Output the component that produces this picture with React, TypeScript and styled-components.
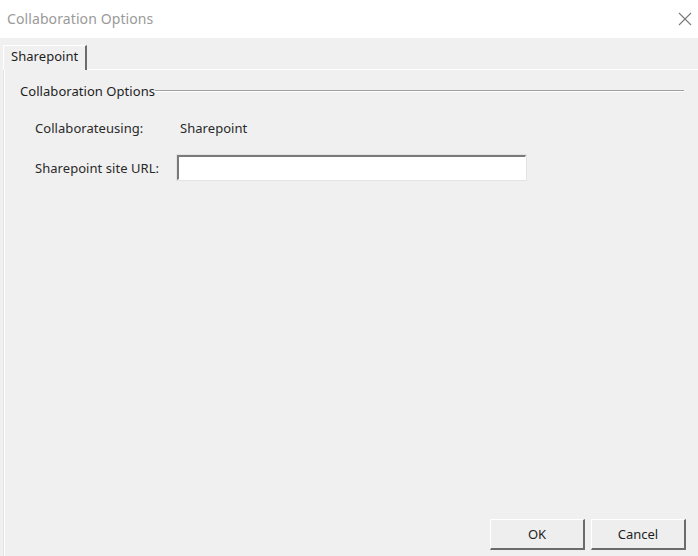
import styled, { createGlobalStyle } from 'styled-components';

const GlobalStyle = createGlobalStyle`
    html, body {
        margin: 0;
        padding: 0;
        background: #f0f0f0;
    }
    body {
        font-family: "Noto Sans", "Open Sans", "Liberation Sans", sans-serif;
        font-size: 13px;
        letter-spacing: 0.05px;
        color: #1e1e1e;
    }
`;

const Window = styled.div`
    width: 698px;
    height: 556px;
    display: flex;
    flex-direction: column;
    background: #f0f0f0;
    overflow: hidden;
`;

const TitleBar = styled.div`
    height: 38px;
    flex-shrink: 0;
    background: #ffffff;
    display: flex;
    align-items: center;
    justify-content: space-between;
    padding: 0 3px 0 7px;
`;

const Title = styled.span`
    font-size: 14px;
    letter-spacing: 0.1px;
    color: #9a9a9a;
    margin-top: -2px;
`;

const CloseButton = styled.button`
    width: 20px;
    height: 20px;
    padding: 0;
    border: none;
    background: transparent;
    display: flex;
    align-items: center;
    justify-content: center;
    margin-top: -1px;
`;

const TabStrip = styled.div`
    height: 31px;
    flex-shrink: 0;
    display: flex;
    align-items: flex-end;
    padding-left: 3px;
`;

const Tab = styled.div`
    height: 25px;
    padding: 0 7px 5px 7px;
    display: flex;
    align-items: center;
    border-top: 1px solid #ffffff;
    border-left: 1px solid #ffffff;
    border-right: 2px solid #6b6b6b;
    box-sizing: border-box;
    margin-bottom: -1px;
    position: relative;
    z-index: 1;
    background: #f0f0f0;
`;

const Panel = styled.div`
    flex: 1;
    display: flex;
    flex-direction: column;
    margin-left: 3px;
    border-top: 1px solid #ffffff;
    border-left: 1px solid #e3e3e3;
    box-shadow: inset 1px 0 0 #ffffff;
`;

const GroupHeader = styled.div`
    display: flex;
    align-items: center;
    margin: 12px 14px 0 16px;
    height: 18px;
`;

const GroupLabel = styled.span`
    color: #1e1e1e;
`;

const GroupLine = styled.div`
    flex: 1;
    height: 1px;
    background: #a0a0a0;
    border-bottom: 1px solid #ffffff;
`;

const Row = styled.div<{ $top: number }>`
    display: flex;
    align-items: center;
    margin-top: ${props => props.$top}px;
    padding-left: 31px;
    height: 25px;
`;

const Label = styled.span`
    width: 145px;
    flex-shrink: 0;
    color: #2a2a2a;
`;

const Value = styled.span`
    color: #2a2a2a;
`;

const UrlInput = styled.input`
    width: 349px;
    height: 25px;
    box-sizing: border-box;
    margin: 0 0 0 -3px;
    padding: 0 4px;
    background: #ffffff;
    border: 1px solid #ffffff;
    border-top: 2px solid #7a7a7a;
    border-left: 2px solid #7a7a7a;
    box-shadow: 0 0 0 1px #e3e3e3;
    font: inherit;
    outline: none;
`;

const Footer = styled.div`
    margin-top: auto;
    display: flex;
    justify-content: flex-end;
    gap: 6px;
    padding: 0 12px 6px 0;
`;

const Button = styled.button`
    width: 95px;
    height: 31px;
    box-sizing: border-box;
    background: #eeeeee;
    border: 1px solid #ffffff;
    border-right: 2px solid #6b6b6b;
    border-bottom: 2px solid #6b6b6b;
    font: inherit;
    color: #1e1e1e;
    padding: 0;
`;

export default function App() {
    return (
        <>
            <GlobalStyle />
            <Window>
                <TitleBar>
                    <Title>Collaboration Options</Title>
                    <CloseButton aria-label="Close">
                        <svg width="14" height="14" viewBox="0 0 14 14">
                            <path d="M1 1 L13 13 M13 1 L1 13" stroke="#7a7a7a" strokeWidth="1.1" fill="none" />
                        </svg>
                    </CloseButton>
                </TitleBar>
                <TabStrip>
                    <Tab>Sharepoint</Tab>
                </TabStrip>
                <Panel>
                    <GroupHeader>
                        <GroupLabel>Collaboration Options</GroupLabel>
                        <GroupLine />
                    </GroupHeader>
                    <Row $top={15}>
                        <Label>Collaborateusing:</Label>
                        <Value>Sharepoint</Value>
                    </Row>
                    <Row $top={15}>
                        <Label>Sharepoint site URL:</Label>
                        <UrlInput type="text" />
                    </Row>
                    <Footer>
                        <Button>OK</Button>
                        <Button>Cancel</Button>
                    </Footer>
                </Panel>
            </Window>
        </>
    );
}
